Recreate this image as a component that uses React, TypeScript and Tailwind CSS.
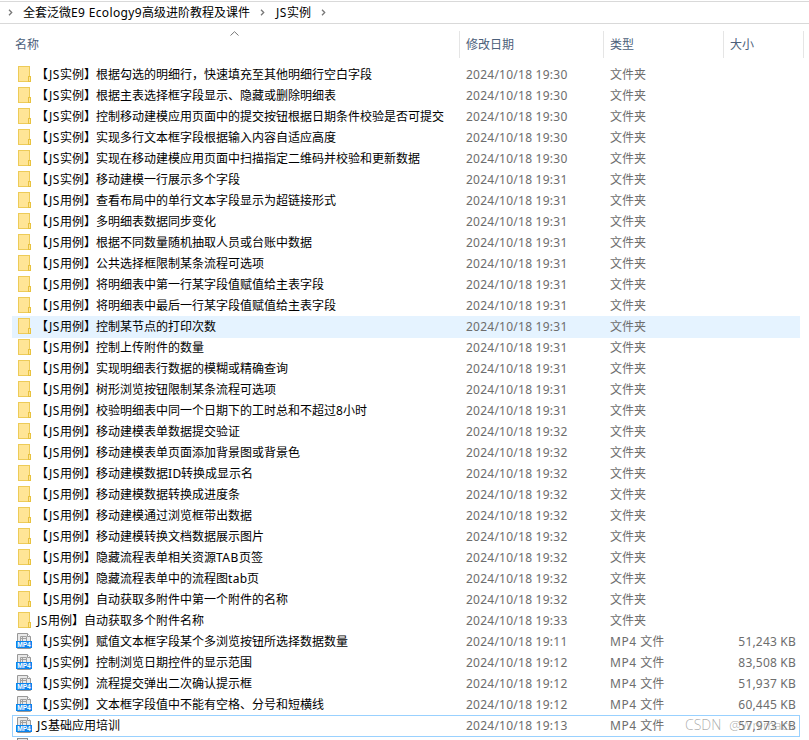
import React from 'react';

type Row = { name: string; time: string; size?: string };

const folders: [string, string][] = [
  ['【JS实例】根据勾选的明细行，快速填充至其他明细行空白字段', '19:30'],
  ['【JS实例】根据主表选择框字段显示、隐藏或删除明细表', '19:30'],
  ['【JS实例】控制移动建模应用页面中的提交按钮根据日期条件校验是否可提交', '19:30'],
  ['【JS实例】实现多行文本框字段根据输入内容自适应高度', '19:30'],
  ['【JS实例】实现在移动建模应用页面中扫描指定二维码并校验和更新数据', '19:30'],
  ['【JS实例】移动建模一行展示多个字段', '19:31'],
  ['【JS用例】查看布局中的单行文本字段显示为超链接形式', '19:31'],
  ['【JS用例】多明细表数据同步变化', '19:31'],
  ['【JS用例】根据不同数量随机抽取人员或台账中数据', '19:31'],
  ['【JS用例】公共选择框限制某条流程可选项', '19:31'],
  ['【JS用例】将明细表中第一行某字段值赋值给主表字段', '19:31'],
  ['【JS用例】将明细表中最后一行某字段值赋值给主表字段', '19:31'],
  ['【JS用例】控制某节点的打印次数', '19:31'],
  ['【JS用例】控制上传附件的数量', '19:31'],
  ['【JS用例】实现明细表行数据的模糊或精确查询', '19:31'],
  ['【JS用例】树形浏览按钮限制某条流程可选项', '19:31'],
  ['【JS用例】校验明细表中同一个日期下的工时总和不超过8小时', '19:31'],
  ['【JS用例】移动建模表单数据提交验证', '19:32'],
  ['【JS用例】移动建模表单页面添加背景图或背景色', '19:32'],
  ['【JS用例】移动建模数据ID转换成显示名', '19:32'],
  ['【JS用例】移动建模数据转换成进度条', '19:32'],
  ['【JS用例】移动建模通过浏览框带出数据', '19:32'],
  ['【JS用例】移动建模转换文档数据展示图片', '19:32'],
  ['【JS用例】隐藏流程表单相关资源TAB页签', '19:32'],
  ['【JS用例】隐藏流程表单中的流程图tab页', '19:32'],
  ['【JS用例】自动获取多附件中第一个附件的名称', '19:32'],
  ['JS用例】自动获取多个附件名称', '19:33'],
];

const rows: Row[] = [
  ...folders.map(([name, time]) => ({ name, time })),
  { name: '【JS实例】赋值文本框字段某个多浏览按钮所选择数据数量', time: '19:11', size: '51,243 KB' },
  { name: '【JS实例】控制浏览日期控件的显示范围', time: '19:12', size: '83,508 KB' },
  { name: '【JS实例】流程提交弹出二次确认提示框', time: '19:12', size: '51,937 KB' },
  { name: '【JS实例】文本框字段值中不能有空格、分号和短横线', time: '19:12', size: '60,445 KB' },
  { name: 'JS基础应用培训', time: '19:13', size: '57,973 KB' },
];

const HOVERED = 12;
const FOCUSED = 31;

const latinStyle: Record<string, string> = {
  JS: 'inline-block w-[12px] pl-[1px] tracking-[0.5px]',
  ID: 'inline-block w-[13px] tracking-[0.3px]',
  TAB: 'inline-block w-[23px] tracking-[0.5px]',
  tab: 'inline-block w-[19px] tracking-[0.3px]',
  '8': 'inline-block w-[7px]',
};

function Name({ text }: { text: string }) {
  return (
    <>
      {text.split(/([A-Za-z0-9]+)/).map((part, i) =>
        latinStyle[part] ? (
          <span key={i} className={latinStyle[part]}>{part}</span>
        ) : (
          part
        ),
      )}
    </>
  );
}

function FolderIcon() {
  return (
    <svg width="16" height="16" viewBox="0 0 16 16" shapeRendering="crispEdges">
      <rect x="2" y="0" width="12" height="16" fill="#edcb58" />
      <rect x="3" y="1" width="10" height="14" fill="#ffe596" />
      <rect x="12" y="10" width="3" height="6" fill="#e8c23f" />
      <rect x="13" y="11" width="1" height="4" fill="#ffe596" />
    </svg>
  );
}

function Mp4Icon() {
  return (
    <svg width="16" height="16" viewBox="0 0 16 16">
      <path d="M1.5 15.5V.5h10l3 3v12z" fill="#e9e9e9" stroke="#989898" />
      <path d="M11.5.5v3h3" fill="#fff" stroke="#989898" />
      <path d="M4.5 8V3.5h6V8M4 5.5h7M6.5 3.5V8" fill="none" stroke="#a0a0a0" />
      <rect y="8" width="16" height="7" fill="#0b84ee" />
      <text
        x="1.2"
        y="14"
        textLength="13.6"
        lengthAdjust="spacingAndGlyphs"
        fill="#fff"
        className="font-['Liberation_Sans',sans-serif] text-[7px] font-bold"
      >
        MP4
      </text>
    </svg>
  );
}

function Chevron() {
  return (
    <svg width="5" height="7" viewBox="0 0 5 7" className="shrink-0">
      <path d="M1 .8 3.7 3.5 1 6.2" fill="none" stroke="#777" strokeWidth="1.3" />
    </svg>
  );
}

export default function App() {
  return (
    <div className="relative flex h-[740px] w-[809px] flex-col overflow-hidden bg-white pt-px font-['Noto_Sans','Noto_Sans_CJK_SC',sans-serif] text-[12px] whitespace-nowrap text-black">
      <nav className="flex h-[23px] shrink-0 items-center border-y border-[#d9d9d9] pl-[8px]">
        <Chevron />
        <span className="ml-[10px] w-[227px] leading-[20px]">
          全套泛微<span className="inline-block w-[71px] tracking-[0.35px]">E9 Ecology9</span>高级进阶教程及课件
        </span>
        <span className="ml-[10px] flex"><Chevron /></span>
        <span className="ml-[10px] w-[37px] leading-[20px]"><Name text="JS实例" /></span>
        <span className="ml-[9px] flex"><Chevron /></span>
      </nav>
      <header className="flex h-[40px] shrink-0 pt-[7px] leading-[27px] text-[#4c607a]">
        <div className="relative h-[27px] w-[460px] border-r border-[#e5e5e5] pl-[15px]">
          名称
          <svg width="9" height="5" viewBox="0 0 9 5" className="absolute top-0 left-[230px]">
            <path d="M.5 4.5 4.5.7l4 3.8" fill="none" stroke="#777" />
          </svg>
        </div>
        <div className="h-[27px] w-[144px] border-r border-[#e5e5e5] pl-[6px]">修改日期</div>
        <div className="h-[27px] w-[120px] border-r border-[#e5e5e5] pl-[6px]">类型</div>
        <div className="h-[27px] w-[80px] border-r border-[#e5e5e5] pl-[6px]">大小</div>
      </header>
      <main className="flex flex-col pl-[12px]">
        {rows.map((row, i) => (
          <div
            key={i}
            className={`-mb-px flex h-[22px] w-[788px] shrink-0 items-center border leading-[20px] ${
              i === HOVERED ? 'border-[#e5f3ff] bg-[#e5f3ff]' : i === FOCUSED ? 'border-[#99d1ff]' : 'border-transparent'
            }`}
          >
            <span className="mb-[2px] ml-[3px] flex w-[20px] shrink-0">{row.size ? <Mp4Icon /> : <FolderIcon />}</span>
            <span className="w-[430px] shrink-0"><Name text={row.name} /></span>
            <span className="w-[144px] shrink-0 tracking-[0.24px] text-[#6d6d6d]">2024/10/18 {row.time}</span>
            <span className="w-[90px] shrink-0 text-[#6d6d6d]">
              {row.size ? <><span className="tracking-[0.5px]">MP4 </span>文件</> : '文件夹'}
            </span>
            <span className="grow pr-[3px] text-right tracking-[0.2px] text-[#6d6d6d]">{row.size}</span>
          </div>
        ))}
        <div className="mt-[2px] ml-[5px] h-[2px] w-[11px] shrink-0 border-x border-t border-[#8a8a8a] bg-[#e9e9e9]" />
      </main>
      <div className="absolute top-[715px] left-[685px] flex gap-[8px] font-['Open_Sans','Noto_Sans_CJK_SC',sans-serif] text-[13px] leading-[20px] font-light text-[#999]/80">
        <span className="text-[14px]">CSDN</span>
        <span>@Wnimacs</span>
      </div>
    </div>
  );
}
